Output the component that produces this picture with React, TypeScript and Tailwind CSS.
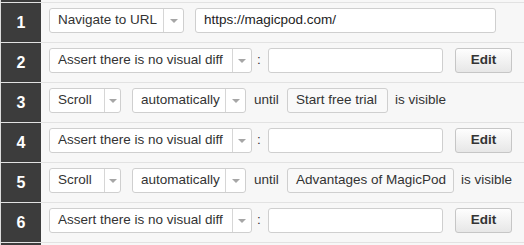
import React from 'react';

const font = { fontFamily: '"Liberation Sans", Arial, sans-serif' };

const Select = ({ label, width, arrow = 20 }: { label: string; width: number; arrow?: number }) => {
  return (
    <div
      className="flex h-[25px] shrink-0 items-stretch rounded-[3px] border border-[#cfcfcf] bg-white text-[13.5px] text-[#333]"
      style={{ width }}
    >
      <div className="flex flex-1 items-center pl-[8px] whitespace-nowrap">{label}</div>
      <div className="flex items-center justify-center border-l border-[#d6d6d6]" style={{ width: arrow }}>
        <span className="block h-0 w-0 border-x-[4px] border-t-[4px] border-x-transparent border-t-[#a6a6a6]" />
      </div>
    </div>
  );
};

const EditButton = () => (
  <button className="ml-[12px] h-[25px] w-[57px] shrink-0 rounded-[3px] border border-[#c6c6c6] bg-gradient-to-b from-[#fefefe] to-[#e7e7e7] text-[13.5px] font-bold text-[#333]">
    Edit
  </button>
);

const AssertRow = () => (
  <>
    <Select label="Assert there is no visual diff" width={203} arrow={19} />
    <span className="ml-[5px] w-[8px] text-[13.5px] text-[#333]">:</span>
    <div className="ml-[3px] h-[25px] w-[175px] shrink-0 rounded-[3px] border border-[#cfcfcf] bg-white" />
    <EditButton />
  </>
);

const ScrollRow = ({ target, boxWidth }: { target: string; boxWidth: number }) => (
  <>
    <Select label="Scroll" width={72} arrow={16} />
    <div className="ml-[11px]">
      <Select label="automatically" width={114} arrow={20} />
    </div>
    <span className="ml-[8px] w-[33px] shrink-0 text-[13.5px] text-[#333]">until</span>
    <div
      className="flex h-[25px] shrink-0 items-center rounded-[3px] border border-[#cfcfcf] bg-[#f9f9f9] pl-[8px] text-[13.5px] whitespace-nowrap text-[#333]"
      style={{ width: boxWidth }}
    >
      {target}
    </div>
    <span className="ml-[7px] text-[13.5px] whitespace-nowrap text-[#333]">is visible</span>
  </>
);

const Row = ({ n, children }: { n: number; children: React.ReactNode }) => (
  <div className="flex h-[40px] border-t border-[#e2e2e2]">
    <div className="flex w-[41px] shrink-0 items-center justify-center border-l border-[#dcdcdc] bg-[#3c3c3c] text-[16px] font-bold text-white">
      {n}
    </div>
    <div className="flex flex-1 items-start pt-[5px] pl-[8px]">
      <div className="flex h-[25px] items-center">{children}</div>
    </div>
  </div>
);

export default function App() {
  return (
    <div className="h-[245px] w-[524px] overflow-hidden bg-[#f7f7f7]" style={font}>
      <div className="flex h-[2px]">
        <div className="w-[41px] border-l border-[#dcdcdc] bg-[#3c3c3c]" />
      </div>
      <Row n={1}>
        <Select label="Navigate to URL" width={135} arrow={20} />
        <div className="ml-[11px] flex h-[25px] w-[301px] shrink-0 items-center rounded-[3px] border border-[#cfcfcf] bg-white pl-[8px] text-[13.5px] text-[#222]">
          https://magicpod.com/
        </div>
      </Row>
      <Row n={2}>
        <AssertRow />
      </Row>
      <Row n={3}>
        <ScrollRow target="Start free trial" boxWidth={101} />
      </Row>
      <Row n={4}>
        <AssertRow />
      </Row>
      <Row n={5}>
        <ScrollRow target="Advantages of MagicPod" boxWidth={167} />
      </Row>
      <Row n={6}>
        <AssertRow />
      </Row>
      <div className="flex h-[40px] border-t border-[#e2e2e2]">
        <div className="w-[41px] border-l border-[#dcdcdc] bg-[#3c3c3c]" />
      </div>
    </div>
  );
}
